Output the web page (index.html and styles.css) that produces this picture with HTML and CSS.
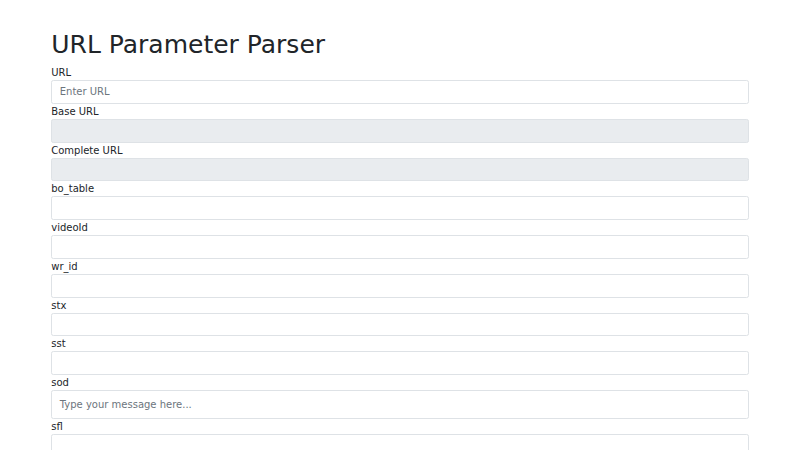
FILE: index.html
```html
<!DOCTYPE html>
<html lang="en">
<head>
<meta charset="utf-8">
<title>URL Parameter Parser</title>
<link rel="stylesheet" href="styles.css">
</head>
<body>
<div class="container">
  <h1 class="title">URL Parameter Parser</h1>
  <div class="field"><label class="label">URL</label><input class="control" type="text" placeholder="Enter URL"></div>
  <div class="field"><label class="label">Base URL</label><input class="control readonly" type="text" readonly></div>
  <div class="field"><label class="label">Complete URL</label><input class="control readonly" type="text" readonly></div>
  <div class="field"><label class="label">bo_table</label><input class="control" type="text"></div>
  <div class="field"><label class="label">videoId</label><input class="control" type="text"></div>
  <div class="field"><label class="label">wr_id</label><input class="control" type="text"></div>
  <div class="field"><label class="label">stx</label><input class="control" type="text"></div>
  <div class="field"><label class="label">sst</label><input class="control" type="text"></div>
  <div class="field"><label class="label">sod</label><textarea class="control area" rows="1" placeholder="Type your message here..."></textarea></div>
  <div class="field"><label class="label">sfl</label><input class="control" type="text"></div>
</div>
</body>
</html>
```
FILE: styles.css
```css
html, body {
  margin: 0;
  padding: 0;
  background: #fff;
}
body {
  font-family: "DejaVu Sans", sans-serif;
  font-size: 10px;
  line-height: 1.5;
  color: #212529;
}
.container {
  width: 697.5px;
  margin: 0 auto;
  padding-top: 30px;
}
.title {
  font-size: 25px;
  font-weight: 500;
  line-height: 1.2;
  margin: 0 0 5px 0;
}
.field {
  display: flex;
  flex-direction: column;
}
.label {
  display: block;
  height: 15px;
}
.control {
  display: block;
  box-sizing: border-box;
  width: 100%;
  height: 23.75px;
  margin: 0;
  padding: 3.75px 7.5px;
  font-family: "DejaVu Sans", sans-serif;
  font-size: 10px;
  line-height: 1.5;
  color: #212529;
  background: #fff;
  border: 1px solid #dee2e6;
  border-radius: 2.35px;
  outline: none;
}
.control::placeholder {
  color: #6c757d;
  opacity: 1;
}
.readonly {
  background: #e9ecef;
}
.area {
  height: 29px;
  padding-top: 5.5px;
  resize: none;
  overflow: hidden;
}
```
